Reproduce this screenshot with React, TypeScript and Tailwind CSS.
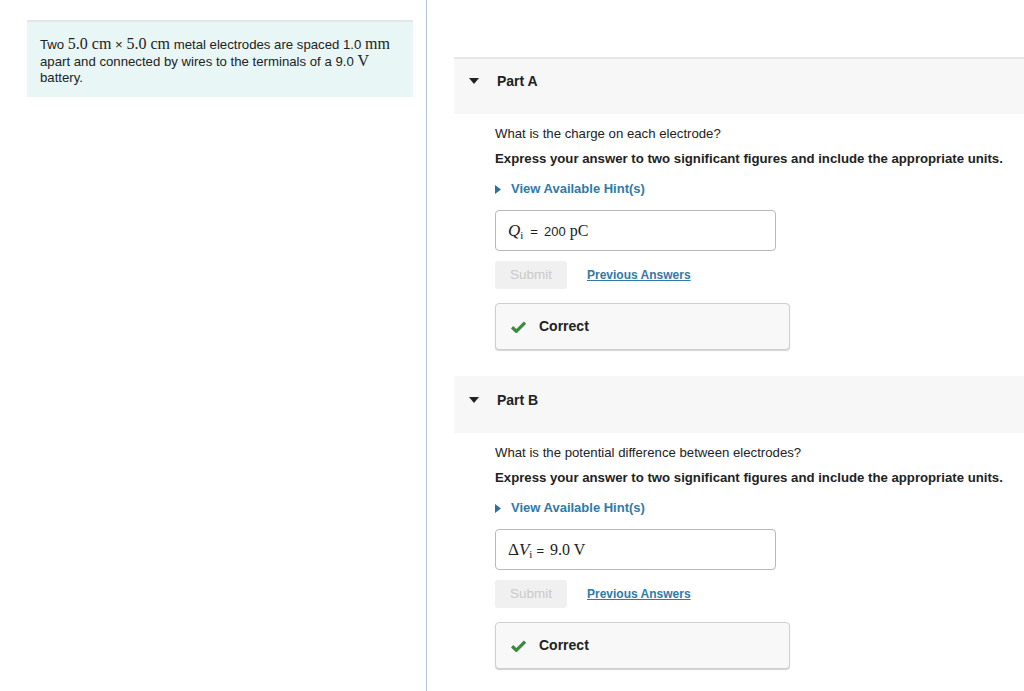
import React from 'react';

const sans = { fontFamily: '"Liberation Sans", Arial, sans-serif' };
const serif = { fontFamily: '"Liberation Serif", "Times New Roman", serif' };

function M({ children }: { children: React.ReactNode }) {
  return <span className="text-[16px] leading-none" style={serif}>{children}</span>;
}

function DownTri() {
  return (
    <svg width="10" height="6" viewBox="0 0 10 6" className="shrink-0">
      <polygon points="0,0 10,0 5,6" fill="#222" />
    </svg>
  );
}

function CheckIcon() {
  return (
    <svg width="15" height="12" viewBox="0 0 15 12" className="shrink-0">
      <path d="M1 6.3 L5.3 10.3 L14 1.6" stroke="#3b8a3e" strokeWidth="3.3" fill="none" strokeLinejoin="miter" />
    </svg>
  );
}

interface PartProps {
  label: string;
  question: string;
  answer: React.ReactNode;
  border?: boolean;
}

function Part({ label, question, answer, border }: PartProps) {
  return (
    <div>
      {/* Header */}
      <div className={`h-[57px] bg-[#f7f7f7] flex items-start pl-[15px] ${border ? 'border-t-2 border-[#e6e6e6] pt-[14px]' : 'pt-[16px]'}`}>
        <div className="h-[16px] flex items-center">
          <DownTri />
        </div>
        <span className="ml-[18px] text-[14px] leading-[16px] font-bold text-[#222]">{label}</span>
      </div>

      {/* Body */}
      <div className="pl-[41px] pt-[12px] flex flex-col">
        <p className="text-[13.2px] leading-[16px] text-[#222]">{question}</p>
        <p className="mt-[9px] text-[13.2px] leading-[16px] font-bold text-[#222]">
          Express your answer to two significant figures and include the appropriate units.
        </p>
        <div className="mt-[14px] flex items-center h-[16px]">
          <svg width="6" height="9" viewBox="0 0 6 9" className="shrink-0">
            <polygon points="0,0 6,4.5 0,9" fill="#2f6f9e" />
          </svg>
          <span className="ml-[10px] text-[13px] font-bold text-[#2f7aa9]">View Available Hint(s)</span>
        </div>
        <div className="mt-[13px] w-[281px] h-[41px] border border-[#b9b9b9] rounded-[4px] bg-white flex items-center pl-[12px] text-[#222]">
          {answer}
        </div>
        <div className="mt-[10px] flex items-center">
          <div className="w-[72px] h-[28px] rounded-[3px] bg-[#f0f0f0] flex items-center justify-center text-[13.5px] text-[#cacaca]">
            Submit
          </div>
          <span className="ml-[20px] text-[12px] font-bold text-[#2f7aa9] underline">Previous Answers</span>
        </div>
        <div className="mt-[14px] w-[295px] h-[47px] rounded-[4px] border border-[#cfcfcf] bg-[#f8f8f8] shadow-[0_1px_1px_rgba(0,0,0,0.18)] flex items-center pl-[15px]">
          <CheckIcon />
          <span className="ml-[13px] text-[14px] font-bold text-[#222]">Correct</span>
        </div>
      </div>
    </div>
  );
}

export default function App() {
  return (
    <div className="w-[1024px] h-[691px] bg-white flex overflow-hidden" style={sans}>
      {/* Left: problem statement */}
      <div className="w-[427px] shrink-0 h-full border-r border-[#b4c1d4] pt-[20px] pl-[27px] pr-[13px]">
        <div className="border-t-2 border-[#e3e6e6] bg-[#e8f6f6] pt-[14px] pb-[11px] pl-[13px] pr-[8px] text-[13.2px] leading-[16px] text-[#222]">
          Two <M>5.0 cm</M> × <M>5.0 cm</M> metal electrodes are spaced 1.0 <M>mm</M> apart and connected by wires to the terminals of a 9.0 <M>V</M> battery.
        </div>
      </div>

      {/* Right: parts */}
      <div className="flex-1 pl-[27px] pt-[57px] flex flex-col gap-[26px]">
        <Part
          label="Part A"
          border
          question="What is the charge on each electrode?"
          answer={
            <span className="flex items-baseline">
              <span className="text-[17px] italic" style={serif}>Q</span>
              <span className="text-[11px] relative top-[3px]" style={serif}>i</span>
              <span className="text-[13px] ml-[7px]">=</span>
              <span className="text-[13px] ml-[6px]">200</span>
              <span className="text-[16px] ml-[4px]" style={serif}>pC</span>
            </span>
          }
        />
        <Part
          label="Part B"
          question="What is the potential difference between electrodes?"
          answer={
            <span className="flex items-baseline">
              <span className="text-[17px]" style={serif}>Δ</span>
              <span className="text-[17px] italic" style={serif}>V</span>
              <span className="text-[11px] relative top-[3px]" style={serif}>i</span>
              <span className="text-[13px] ml-[4px]">=</span>
              <span className="text-[16px] ml-[6px]" style={serif}>9.0 V</span>
            </span>
          }
        />
      </div>
    </div>
  );
}
